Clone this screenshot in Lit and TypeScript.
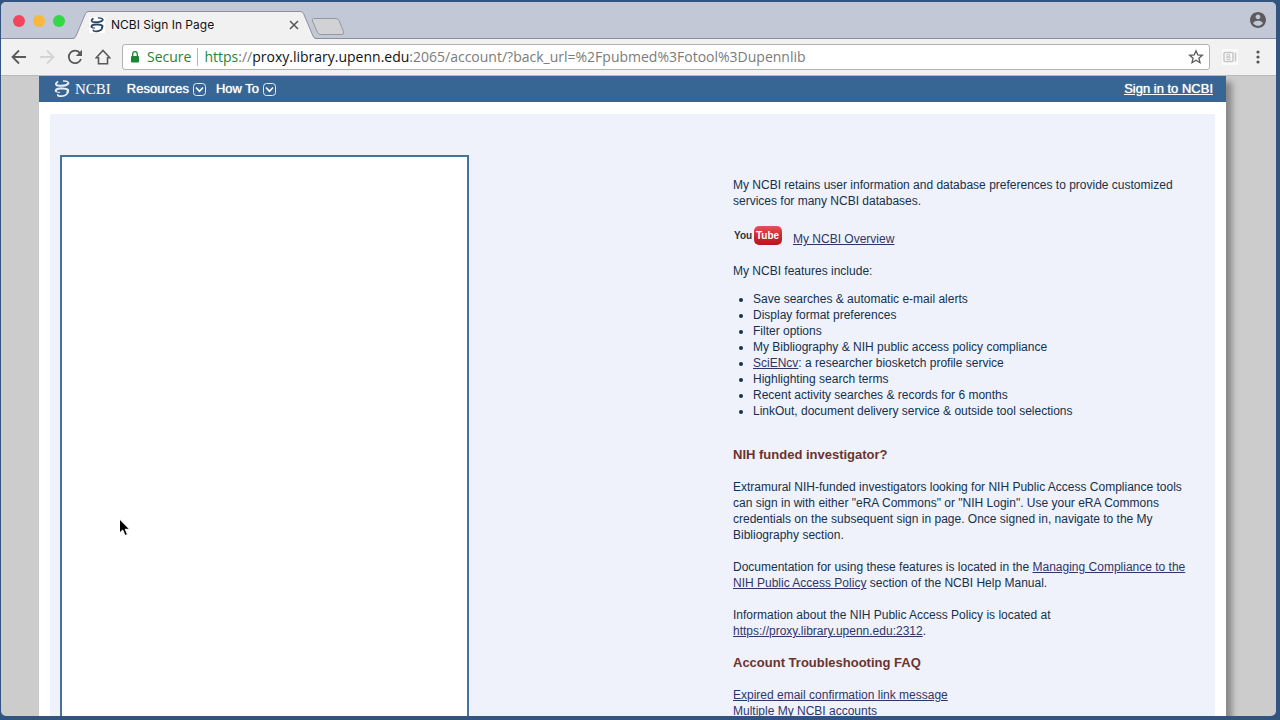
import { LitElement, html, css, svg } from "lit";
import { customElement, property } from "lit/decorators.js";

const helix = (color: string) => svg`
  <g fill="none" stroke=${color} stroke-linecap="round" stroke-linejoin="round">
    <path d="M3.400 2 C1 3.600 1.400 5.600 5 5.800 C9 6 13 5.600 14.400 3.400" stroke-width="2"/>
    <path d="M9.500 1 C13 .9 15 1.800 14.400 3.400" stroke-width="1.400"/>
    <path d="M1.800 11 C1.800 8.600 5.500 8.200 9 8.500 C13.500 8.800 15.400 10 13.400 12" stroke-width="2.200"/>
    <path d="M1.800 11 C2 12 3.400 12.400 5.400 12.400" stroke-width="1.200"/>
    <path d="M13.800 11.500 C14.600 13.800 11 16 7.600 16.200 C5.600 16.300 4 16 3.800 15" stroke-width="1.800"/>
  </g>`;

@customElement("browser-chrome")
export class BrowserChrome extends LitElement {
  @property() heading = "";

  static styles = css`
    :host { display: block; font-family: Inter, Roboto, sans-serif; }
    button { border: 0; background: none; padding: 0; display: block; }
    svg { display: block; }
    .strip {
      display: flex; align-items: flex-end; height: 36px;
      background: #c3c8d6; border-bottom: 1px solid #8a8fa0;
    }
    .lights { display: flex; gap: 8px; align-self: center; margin: 2px 8px 0 12px; }
    .light { width: 12px; height: 12px; border-radius: 50%; }
    .close { background: #f3465c; }
    .min { background: #f8b83c; }
    .max { background: #35d747; }
    .tab {
      position: relative; display: flex; align-items: center; width: 243px; height: 28px;
      margin: 0 0 -1px; padding: 0 16px; box-sizing: border-box;
    }
    .shape { position: absolute; inset: 0; }
    .favicon, .title, .x { position: relative; }
    .title { flex: 1; margin-left: 6px; font-size: 12px; line-height: 16px; color: #111; }
    .newtab { margin: 0 auto 3px -5px; }
    .person { align-self: center; margin-right: 10px; }
    .bar {
      display: flex; align-items: center; height: 37px; background: #f2f1f2;
      border-bottom: 1px solid #b9b9b9; box-sizing: border-box;
    }
    .nav { display: flex; gap: 12px; margin: 0 11px 0 10px; }
    .url {
      flex: 1; display: flex; align-items: center; height: 26px; box-sizing: border-box;
      border: 1px solid #b2b2b2; border-radius: 3px; background: #fff;
      padding: 0 5px 0 6px; color: #7b7b7b; white-space: nowrap;
      font: 14px/18px "Open Sans", sans-serif;
    }
    .secure { color: #1e8536; padding: 0 6px 0 6px; margin-right: 6px; border-right: 1px solid #b5b5b5; }
    .scheme { color: #1e8536; }
    .host { color: #111; }
    .address { flex: 1; }
    .ext { display: flex; gap: 18px; align-items: center; margin: 0 16px 0 12px; }
  `;

  render() {
    return html`
      <div class="strip">
        <div class="lights">
          <button class="light close" aria-label="Close"></button>
          <button class="light min" aria-label="Minimize"></button>
          <button class="light max" aria-label="Zoom"></button>
        </div>
        <div class="tab">
          <svg class="shape" width="243" height="28" viewBox="0 0 243 28">
            <path d="M0 28 Q2 27.500 3 25 L12.500 2.500 Q13.500 .5 16 .5 H227 Q229.500 .5 230.500 2.500 L240 25 Q241 27.500 243 28Z" fill="#f2f1f2"/>
            <path d="M0 27.500 Q2 27.500 3 25 L12.500 2.500 Q13.500 .5 16 .5 H227 Q229.500 .5 230.500 2.500 L240 25 Q241 27.500 243 27.500" fill="none" stroke="#8a8fa0"/>
          </svg>
          <svg class="favicon" width="16" height="16" viewBox="-1 0 18 18"><rect x="-1" width="18" height="18" fill="#fff"/>${helix("#2b4766")}</svg>
          <span class="title">${this.heading}</span>
          <button class="x" aria-label="Close tab">
            <svg width="12" height="12"><path d="M2 2 L10 10 M10 2 L2 10" stroke="#555" stroke-width="1.500"/></svg>
          </button>
        </div>
        <button class="newtab" aria-label="New tab">
          <svg width="34" height="17"><path d="M4 .5 H25 Q27 .5 28 2.500 L32.500 13.500 Q33.500 16.500 31 16.500 H9.500 Q7.500 16.500 6.500 14.500 L1.500 3 Q.5 .5 4 .5Z" fill="#d2d2d4" stroke="#9297a4"/></svg>
        </button>
        <button class="person" aria-label="Profile">
          <svg width="16" height="16" viewBox="2 2 20 20"><path fill="#5c5c60" d="M12 2C6.480 2 2 6.480 2 12s4.480 10 10 10 10-4.480 10-10S17.520 2 12 2zm0 3c1.660 0 3 1.340 3 3s-1.340 3-3 3-3-1.340-3-3 1.340-3 3-3zm0 14.200c-2.500 0-4.710-1.280-6-3.220.030-1.990 4-3.080 6-3.080 1.990 0 5.970 1.090 6 3.080-1.290 1.940-3.500 3.220-6 3.220z"/></svg>
        </button>
      </div>
      <div class="bar">
        <div class="nav">
          <button aria-label="Back"><svg width="16" height="16"><path d="M15 8 H2 M8 1.500 L1.500 8 L8 14.500" fill="none" stroke="#5a5a5a" stroke-width="1.800"/></svg></button>
          <button aria-label="Forward"><svg width="16" height="16"><path d="M1 8 H14 M8 1.500 L14.500 8 L8 14.500" fill="none" stroke="#d4d4d4" stroke-width="1.800"/></svg></button>
          <button aria-label="Reload"><svg width="16" height="16"><path d="M13.200 4.200 A6.300 6.300 0 1 0 14 10" fill="none" stroke="#5a5a5a" stroke-width="1.800"/><path d="M15 .8 V7 H8.800Z" fill="#5a5a5a"/></svg></button>
          <button aria-label="Home"><svg width="16" height="16"><path d="M1.200 8.800 L8 1.500 L14.800 8.800 H12.500 V14.700 H3.500 V8.800Z" fill="none" stroke="#5a5a5a" stroke-width="1.600"/></svg></button>
        </div>
        <div class="url">
          <svg width="12" height="14"><rect x="2" y="6" width="8" height="6.500" rx="1" fill="#1e8536"/><path d="M3.700 6 V4 A2.300 2.300 0 0 1 8.300 4 V6" fill="none" stroke="#1e8536" stroke-width="1.300"/></svg>
          <span class="secure">Secure</span>
          <span class="address"><span class="scheme">https</span>://<span class="host">proxy.library.upenn.edu</span>:2065/account/?back_url=%2Fpubmed%3Fotool%3Dupennlib</span>
          <button aria-label="Bookmark"><svg width="16" height="16"><path d="M8 1.800 L9.800 6 L14.300 6.300 L10.900 9.200 L12 13.700 L8 11.300 L4 13.700 L5.100 9.200 L1.700 6.300 L6.200 6Z" fill="none" stroke="#5a5a5a" stroke-width="1.300"/></svg></button>
        </div>
        <div class="ext">
          <button aria-label="Extension"><svg width="16" height="16"><rect width="16" height="16" fill="#fafafa"/><g fill="none" stroke="#c6c6c6" stroke-width="1.500"><rect x="2" y="3.500" width="9" height="9" rx="1"/><path d="M5 5.500 H7.500 V8 H5Z M5 8 H8 V10.500 H5Z" stroke-width="1"/><path d="M13.500 3.500 V12.500"/></g></svg></button>
          <button aria-label="Menu"><svg width="4" height="14"><circle cx="2" cy="2" r="1.600" fill="#555"/><circle cx="2" cy="7" r="1.600" fill="#555"/><circle cx="2" cy="12" r="1.600" fill="#555"/></svg></button>
        </div>
      </div>`;
  }
}

@customElement("ncbi-header")
export class NcbiHeader extends LitElement {
  static styles = css`
    :host { display: block; }
    .head {
      display: flex; align-items: center; height: 26px; padding: 0 13px 0 15px;
      background: #386694; color: #fff; font-size: 13px; line-height: 16px;
    }
    svg { display: block; }
    a { color: #fff; }
    .logo { display: flex; align-items: center; gap: 5px; margin-right: 16px; text-decoration: none; font: 15px/24px "Liberation Serif", serif; }
    .menu {
      display: flex; align-items: center; gap: 4px; margin-right: 10px; padding: 0;
      border: 0; background: none; color: #fff; font: inherit; text-shadow: 0 0 1px #fff;
    }
    .signin { margin-left: auto; text-shadow: 0 0 1px #fff; }
  `;

  render() {
    return html`
      <header class="head">
        <a class="logo" href="#"><svg width="16" height="18" viewBox="0 0 16 18">${helix("#e6eef6")}</svg>NCBI</a>
        ${["Resources", "How To"].map((label) => html`
          <button class="menu">${label}
            <svg width="13" height="13"><rect x=".5" y=".5" width="12" height="12" rx="3" fill="none" stroke="#e4ecf4"/><path d="M3 4.500 L6.500 8.300 L10 4.500" fill="none" stroke="#fff" stroke-width="1.500"/></svg>
          </button>`)}
        <a class="signin" href="#">Sign in to NCBI</a>
      </header>`;
  }
}

@customElement("app-root")
export class AppRoot extends LitElement {
  static styles = css`
    :host {
      display: flex; flex-direction: column; height: 100vh; box-sizing: border-box;
      padding: 2px 4px 4px 1px; background: #345480; font-family: "Liberation Sans", Arial, sans-serif;
    }
    .window {
      flex: 1; min-height: 0; display: flex; flex-direction: column; overflow: hidden;
      border-radius: 5px; background: #ccc;
    }
    .viewport { flex: 1; min-height: 0; overflow: hidden; padding: 0 50px 0 38px; }
    .sheet { background: #fff; box-shadow: 6px 6px 6px #888; min-height: 100%; }
    .content { padding: 12px 11px; }
    .panel {
      display: flex; justify-content: space-between; padding: 41px 25px 24px 10px;
      background: #eff2fb; color: #15304c; font-size: 12px; line-height: 16px;
    }
    .login { width: 405px; height: 640px; border: 2px solid #44749c; background: #fff; }
    .info { width: 457px; padding-top: 22px; }
    p { margin: 0 0 16px; }
    a { color: #2f3568; }
    .video { display: flex; align-items: flex-end; gap: 10px; margin: 0 0 16px; }
    .you, .tube { font: 700 10px "Liberation Sans", sans-serif; }
    .you { fill: #333; }
    .tube { fill: #fff; }
    ul { margin: -4px 0 28px; padding-left: 20px; }
    h2 { margin: 0 0 16px; font-size: 13px; line-height: 16px; color: #6b322e; }
    .faq { margin: 0; padding: 0; list-style: none; }
    .pointer { position: absolute; left: 117px; top: 517px; }
  `;

  private features = [
    "Save searches & automatic e-mail alerts",
    "Display format preferences",
    "Filter options",
    "My Bibliography & NIH public access policy compliance",
    html`<a href="#">SciENcv</a>: a researcher biosketch profile service`,
    "Highlighting search terms",
    "Recent activity searches & records for 6 months",
    "LinkOut, document delivery service & outside tool selections",
  ];

  render() {
    return html`
      <div class="window">
        <browser-chrome heading="NCBI Sign In Page"></browser-chrome>
        <div class="viewport">
          <div class="sheet">
            <ncbi-header></ncbi-header>
            <div class="content">
              <main class="panel">
                <section class="login" aria-label="Sign in"></section>
                <section class="info">
                  <p>My NCBI retains user information and database preferences to provide customized services for many NCBI databases.</p>
                  <div class="video">
                    <svg width="50" height="22" role="img" aria-label="YouTube">
                      <defs><linearGradient id="red" x2="0" y2="1"><stop offset="0" stop-color="#e0545a"/><stop offset=".5" stop-color="#cf2a32"/><stop offset="1" stop-color="#b5161f"/></linearGradient></defs>
                      <rect x="21" y="1" width="28" height="19" rx="5" fill="url(#red)"/>
                      <text class="you" x="1" y="14">You</text>
                      <text class="tube" x="23" y="14">Tube</text>
                    </svg>
                    <a href="#">My NCBI Overview</a>
                  </div>
                  <p>My NCBI features include:</p>
                  <ul>${this.features.map((f) => html`<li>${f}</li>`)}</ul>
                  <h2>NIH funded investigator?</h2>
                  <p>Extramural NIH-funded investigators looking for NIH Public Access Compliance tools can sign in with either "eRA Commons" or "NIH Login". Use your eRA Commons credentials on the subsequent sign in page. Once signed in, navigate to the My Bibliography section.</p>
                  <p>Documentation for using these features is located in the <a href="#">Managing Compliance to the NIH Public Access Policy</a> section of the NCBI Help Manual.</p>
                  <p>Information about the NIH Public Access Policy is located at <a href="#">https://proxy.library.upenn.edu:2312</a>.</p>
                  <h2>Account Troubleshooting FAQ</h2>
                  <ul class="faq">
                    <li><a href="#">Expired email confirmation link message</a></li>
                    <li><a href="#">Multiple My NCBI accounts</a></li>
                  </ul>
                </section>
              </main>
            </div>
          </div>
        </div>
      </div>
      <svg class="pointer" width="14" height="22"><path d="M2.500 2 V16 L5.700 13 L8 18.500 L10.500 17.500 L8.200 12.300 H12.600Z" fill="#000" stroke="#fff" stroke-width="1"/></svg>`;
  }
}
